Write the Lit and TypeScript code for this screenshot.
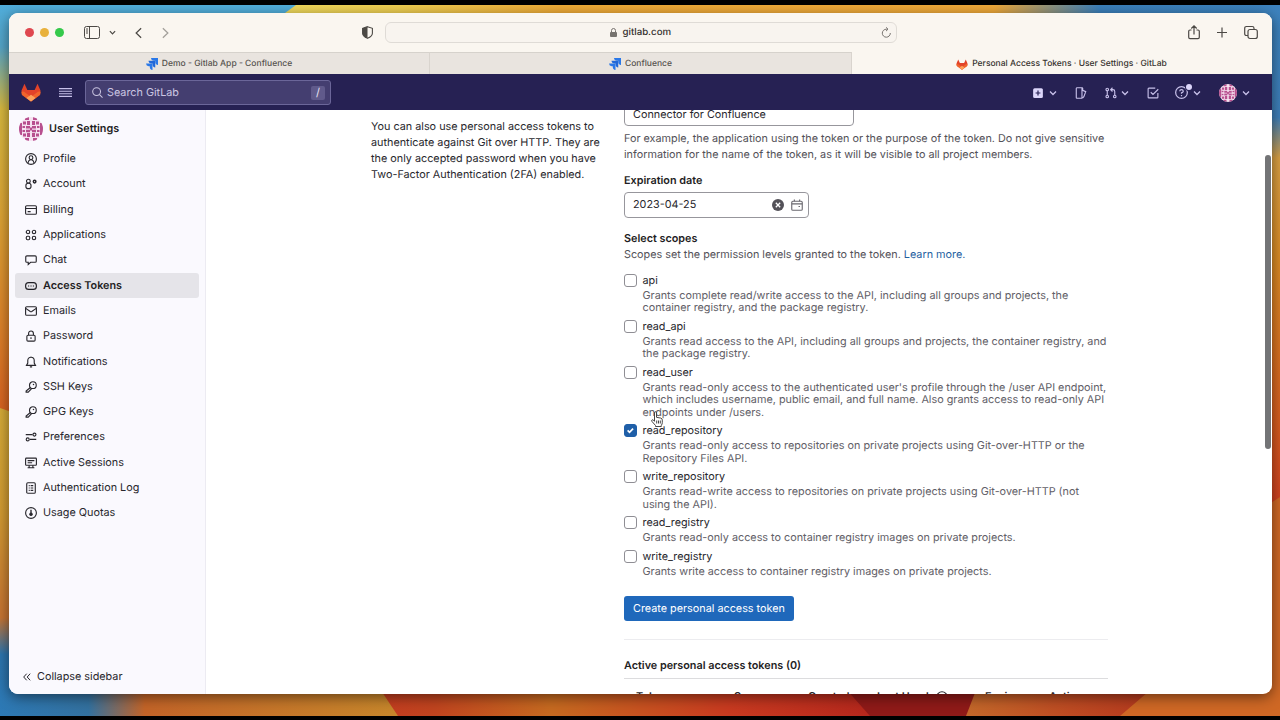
import { LitElement, html, css, svg } from "lit";
import { customElement } from "lit/decorators.js";

const FOX = html`<svg class="fox" viewBox="0 0 24 23">
  <path fill="#e24329" d="M12 22.5 1.2 14.4 .5 9.2 4.1.8 7.6 8.4h8.8L19.9.8l3.6 8.4-.7 5.2z"/>
  <path fill="#f0642c" d="M12 22.500.9 14.300.3 10.500Q3 9.600 5.600 12L12 17l6.400-5Q21 9.600 23.700 10.500l-.6 3.800z"/>
  <path fill="#fca05a" d="m12 22.500-5.500-4.200L12 14.200l5.500 4.100z"/>
</svg>`;

const JIRA = html`<svg class="jira" viewBox="0 0 24 24" fill="#2a78e8">
  <path d="M10 0H24v14a6 6 0 0 1-5.400-6V5.400H16A6 6 0 0 1 10 0z"/>
  <path fill="#2268d8" d="M5 5.500h13.500V19a6 6 0 0 1-5.400-6v-2.100H11a6 6 0 0 1-6-5.400z"/>
  <path d="M0 11h13v13a6 6 0 0 1-5.400-6v-1.600H5.400A6 6 0 0 1 0 11z"/>
</svg>`;

const stroke = (inner: unknown, cls = "ic") => html`<svg class=${cls} viewBox="0 0 16 16" fill="none" stroke="currentColor" stroke-width="1.5">${inner}</svg>`;
const chevron = (cls: string) => html`<svg class="chev ${cls}" viewBox="0 0 8 8" fill="none" stroke="currentColor" stroke-width="1.3"><path d="m1 2.500 3 3 3-3"/></svg>`;
const KEY = svg`<circle cx="10.500" cy="5.500" r="4.500"/><path d="M7.200 8.700 1.500 13.400v1.400h2.800l4.800-4.900"/><circle cx="11.300" cy="4.700" r="1" fill="currentColor" stroke="none"/>`;

const AVATAR = html`<svg class="avatar" viewBox="0 0 24 24">
  <defs><clipPath id="c"><circle cx="12" cy="12" r="12"/></clipPath></defs>
  <g clip-path="url(#c)"><rect width="24" height="24" fill="#f6e3f1"/>
  <g fill="#b8508f">
    <path d="M0 6h3v12H0zM21 6h3v12h-3zM6 0h4v3H6zM14 0h4v3h-4zM6 21h4v3H6zM14 21h4v3h-4z"/>
    <path d="M4 4.500h3v3H4zM17 4.500h3v3h-3zM4 16.500h3v3H4zM17 16.500h3v3h-3zM8 4h3v4H8zM13 4h3v4h-3zM8 16h3v4H8zM13 16h3v4h-3zM7 9h4v2.500H7zM13 9h4v2.500h-4zM7 12.800h4v2.500H7zM13 12.800h4v2.500h-4zM3.500 9H6v2H3.500zM18 9h2.500v2H18zM3.500 13H6v2H3.500zM18 13h2.500v2H18zM11 10.500h2v3h-2z"/>
  </g></g>
</svg>`;

const NAV: { label: string; icon: unknown; active?: boolean }[] = [
  { label: "Profile", icon: svg`<circle cx="8" cy="8" r="7.200"/><circle cx="8" cy="6.200" r="2.500"/><path d="M3.800 13.500 5.500 9.800M12.200 13.500l-1.700-3.700M5 10.500q3-3 6 0"/>` },
  { label: "Account", icon: svg`<circle cx="4.500" cy="4.200" r="2.500"/><rect x="1.200" y="7" width="6.800" height="7.200" rx="3"/><circle cx="12.800" cy="4.800" r="1.700" stroke-width="2"/>` },
  { label: "Billing", icon: svg`<rect x=".8" y="2.300" width="14.400" height="11.400" rx="1.500"/><path d="M.8 6h14.400M3.500 10.200h4"/>` },
  { label: "Applications", icon: svg`<circle cx="4" cy="4" r="2.300"/><circle cx="12" cy="4" r="2.300"/><rect x="1.700" y="9.700" width="4.600" height="4.600" rx="1.500"/><circle cx="12" cy="12" r="2.300"/>` },
  { label: "Chat", icon: svg`<path d="M2.500 2.500h11a1.500 1.500 0 0 1 1.500 1.500v5.500a1.500 1.500 0 0 1-1.500 1.500H7.500L4.300 14v-3H2.500A1.500 1.500 0 0 1 1 9.500V4a1.500 1.500 0 0 1 1.500-1.500z"/>` },
  { label: "Access Tokens", active: true, icon: svg`<rect x=".8" y="3.500" width="14.400" height="9" rx="4"/><path d="M4 8h1.500M7.300 8h1.500M10.500 8H12"/>` },
  { label: "Emails", icon: svg`<rect x=".8" y="2.300" width="14.400" height="11.400" rx="1.500"/><path d="m1 4.500 6 4.200q1 .6 2 0l6-4.200"/>` },
  { label: "Password", icon: svg`<rect x="2.500" y="7" width="11" height="7.800" rx="1.500"/><path d="M4.800 7V4.500a3.200 3.200 0 0 1 6.400 0V7M8 9.800v2.200"/>` },
  { label: "Notifications", icon: svg`<path d="M2 12.500 3.700 9.500V6a4.300 4.300 0 0 1 8.600 0v3.500l1.700 3zM8 .5v1.300M6.500 14.500h3"/>` },
  { label: "SSH Keys", icon: KEY },
  { label: "GPG Keys", icon: KEY },
  { label: "Preferences", icon: svg`<path d="M1 4.800h9M6.500 11.200H15"/><circle cx="12.600" cy="4.800" r="2"/><circle cx="3.600" cy="11.200" r="2"/>` },
  { label: "Active Sessions", icon: svg`<rect x=".8" y="1.500" width="14.400" height="9.500" rx="1"/><path d="M3.500 4.800h9M3.500 7.600h6M5.500 11v3M10.500 11v3M3.500 14.300h9"/>` },
  { label: "Authentication Log", icon: svg`<rect x="2.300" y="1" width="11.400" height="14" rx="1.500"/><path d="M5 4.800h1.300M7.500 4.800H11M5 8h1.300M7.500 8H11M5 11.200h1.300M7.500 11.200H11"/>` },
  { label: "Usage Quotas", icon: svg`<circle cx="8" cy="8" r="7.200"/><path d="M8 3.500v5" stroke-width="1.800"/><circle cx="8" cy="9.800" r="1.600" fill="currentColor"/>` },
];

const SCOPES: { name: string; lines: string[]; checked?: boolean }[] = [
  { name: "api", lines: ["Grants complete read/write access to the API, including all groups and projects, the", "container registry, and the package registry."] },
  { name: "read_api", lines: ["Grants read access to the API, including all groups and projects, the container registry, and", "the package registry."] },
  { name: "read_user", lines: ["Grants read-only access to the authenticated user's profile through the /user API endpoint,", "which includes username, public email, and full name. Also grants access to read-only API", "endpoints under /users."] },
  { name: "read_repository", checked: true, lines: ["Grants read-only access to repositories on private projects using Git-over-HTTP or the", "Repository Files API."] },
  { name: "write_repository", lines: ["Grants read-write access to repositories on private projects using Git-over-HTTP (not", "using the API)."] },
  { name: "read_registry", lines: ["Grants read-only access to container registry images on private projects."] },
  { name: "write_registry", lines: ["Grants write access to container registry images on private projects."] },
];

@customElement("app-root")
export class AppRoot extends LitElement {
  static styles = css`
    :host { display: block; width: 1280px; height: 720px; overflow: hidden; background: #000;
      font-family: Inter, "Liberation Sans", sans-serif; font-size: 10.82px; line-height: 16px; color: #28272d;
      text-rendering: geometricPrecision; }
    * { box-sizing: border-box; }
    svg { display: block; flex: none; }
    .stage { position: relative; height: 720px; padding: 13px 8px 27px 9px; }
    .wall { position: absolute; left: 0; top: 5px; width: 1280px; height: 711px; }
    .window { position: relative; height: 681px; border-radius: 9px; overflow: hidden; background: #fff;
      display: flex; flex-direction: column; }
    .shade { position: absolute; left: 9px; top: 13px; width: 1263px; height: 681px; border-radius: 9px; box-shadow: 0 3px 14px rgba(0,0,0,.5); }
    .toolbar { height: 39px; flex: none; background: #faf6f0; display: flex; align-items: center; color: #4c4945; padding: 0 14.500px 0 15.500px; }
    .lights { display: flex; gap: 5.500px; margin-right: 19.500px; }
    .lights i { width: 9.600px; height: 9.600px; border-radius: 50%; background: #df4850; }
    .lights i:nth-child(2) { background: #e8b13c; }
    .lights i:nth-child(3) { background: #35c94b; }
    .side { width: 16px; height: 13px; margin-right: 9px; }
    .down { width: 7px; height: 7px; margin-right: 19px; }
    .nav { width: 7px; height: 12px; margin-right: 20px; }
    .nav.fwd { opacity: .5; margin-right: 193px; }
    .shield { width: 11px; height: 13px; margin-right: 12px; }
    .url { width: 512px; height: 21px; border: 1px solid #dfdbd6; border-radius: 6px; background: #f8f4ef; display: flex; align-items: center;
      justify-content: center; gap: 5px; font-size: 9.700px; font-weight: 450; color: #33302d; position: relative; }
    .lock { width: 7px; height: 9px; }
    .reload { position: absolute; right: 4px; top: 4px; width: 11px; height: 11px; }
    .right { margin-left: auto; display: flex; align-items: center; gap: 14.500px; }
    .right svg { width: 14px; height: 15px; }
    .tabs { height: 22px; flex: none; display: grid; grid-template-columns: 421px 422px 1fr; font-size: 8.520px; font-weight: 450; color: #57534f; }
    .tab { display: flex; align-items: center; justify-content: center; gap: 4px; padding-top: 1px; background: #e9e4df; border-top: 1px solid #d6d2cc; border-right: 1px solid #d9d4ce; }
    .tab.on { background: #faf6f0; border-color: #faf6f0; color: #37332f; }
    .jira { width: 12px; height: 12px; }
    .tab .fox { width: 12px; height: 11px; }
    .header { height: 36px; flex: none; background: #262153; display: flex; align-items: center; padding: 1px 0 0 12px; color: #c8c1ea; }
    .header .fox { width: 20px; height: 19px; }
    .burger { width: 13px; height: 9px; margin: 0 13px 0 18px; }
    .search { width: 246px; height: 25px; border: 1px solid #6b6699; border-radius: 3px; background: #443e70; display: flex; align-items: center;
      padding: 0 5px 0 6px; gap: 4px; color: #cbc6e2; }
    .search .ic { width: 11px; height: 11px; }
    .search kbd { margin-left: auto; width: 14px; height: 14px; border-radius: 2px; background: #605a8b; font: inherit; line-height: 14px; text-align: center; color: #e9e6f5; }
    .tools { margin-left: auto; display: flex; align-items: center; margin-right: 22px; }
    .tools .ic { width: 12px; height: 12px; }
    .chev { width: 8px; height: 8px; }
    .g1 { margin-left: 5px; margin-right: 17.500px; }
    .notes { margin-right: 18.500px; }
    .g2 { margin-left: 4px; margin-right: 18px; }
    .help-ic { position: relative; margin-left: 16px; }
    .tools .help-ic .ic { width: 13px; height: 13px; }
    .dot { position: absolute; left: 11px; top: -2px; width: 6px; height: 6px; border-radius: 50%; background: #dcd6fa; box-shadow: 0 0 0 1px #262153; }
    .g3 { margin-left: 5px; margin-right: 18px; }
    .g4 { margin-left: 5px; }
    .tools .avatar { width: 18px; height: 18px; }
    .body { flex: 1; min-height: 0; display: flex; position: relative; }
    .sidebar { width: 197px; flex: none; background: #faf9fe; border-right: 1px solid #ecebf2; display: flex; flex-direction: column; padding: 7.200px 6px 0; }
    .who { display: flex; align-items: center; gap: 6px; font-weight: 600; height: 23px; padding-left: 4px; margin-bottom: 6.300px; color: #1f1e24; }
    .who .avatar { width: 24px; height: 24px; }
    .item { height: 25.300px; flex: none; display: flex; align-items: center; gap: 6px; padding-left: 10px; border-radius: 3px; white-space: nowrap; }
    .item .ic { width: 12px; height: 12px; }
    .item.active { background: #e5e4e9; font-weight: 600; color: #1f1e24; }
    .collapse { margin-top: auto; margin-bottom: 9.400px; display: flex; align-items: center; gap: 6.500px; padding-left: 7.500px; }
    .collapse svg { width: 8px; height: 8px; }
    .main { flex: 1; min-width: 0; display: flex; overflow: hidden; padding-left: 165px; white-space: nowrap; }
    .intro { width: 253px; flex: none; padding-top: 8.900px; }
    .form { width: 484px; flex: none; margin-top: -9.200px; }
    .field { border: 1px solid #97969c; border-radius: 4px; height: 26px; display: flex; align-items: center; padding: 0 8px; }
    .name { width: 230px; height: 25.200px; padding-top: 3px; }
    .help { margin-top: 4.800px; color: #535158; }
    .label { font-weight: 600; color: #1f1e24; }
    .exp { margin: 10px 0 3.200px; }
    .date { width: 185px; padding: 1px 5px 0 8px; }
    .date .clear { width: 12px; height: 12px; margin-left: auto; margin-right: 7px; }
    .date .ic { width: 12px; height: 12px; color: #6a686f; }
    .sel { margin-top: 12.800px; }
    .sub { color: #535158; margin-bottom: 10.200px; }
    .sub a { color: #1f5f9f; }
    .scope { display: grid; grid-template-columns: 18.500px 1fr; padding-bottom: 4.400px; }
    .box { width: 12.500px; height: 12.500px; margin-top: 1.200px; border: 1px solid #8f8e94; border-radius: 3px; background: #fff; }
    .box.checked { background: #1f5fa8; border-color: #1f5fa8; }
    .box svg { width: 10.500px; height: 10.500px; }
    .desc { margin-top: 1.200px; line-height: 12.200px; color: #626067; }
    .btn { margin-top: 13.500px; width: 170px; height: 25px; border-radius: 3px; background: #1f68bb; color: #fff; display: flex; align-items: center; justify-content: center; }
    .rule { height: 1px; background: #ececef; margin: 18px 0 17.500px; }
    .tokens { padding-bottom: 4.500px; border-bottom: 1px solid #dcdcde; }
    .thead { display: grid; grid-template-columns: 98px 74px 69px 108px 64px 1fr; padding: 10px 0 0 12px; font-weight: 600; }
    .last { display: flex; gap: 7px; }
    .thead .ic { width: 12px; height: 12px; margin-top: 2px; }
    .scroll { position: absolute; right: 1px; top: 45px; width: 6px; height: 294px; border-radius: 3px; background: #737476; }
    .hand { position: absolute; left: 651px; top: 411px; width: 12px; height: 16px; }
  `;

  render() {
    return html`
    <div class="stage">
      <svg class="wall" viewBox="0 5 1280 711" preserveAspectRatio="none">
        <defs>
          <linearGradient id="topy"><stop offset="0" stop-color="#f0df62"/><stop offset=".17" stop-color="#efcf52"/><stop offset=".32" stop-color="#f0ac38"/><stop offset=".73" stop-color="#efa93a"/><stop offset=".83" stop-color="#3b80bb"/><stop offset="1" stop-color="#3d83be"/></linearGradient>
          <linearGradient id="l" x2="0" y2="1"><stop offset="0" stop-color="#50addb"/><stop offset=".1" stop-color="#55a5c8"/><stop offset=".25" stop-color="#d8b93f"/><stop offset=".5" stop-color="#dda535"/><stop offset=".8" stop-color="#dd7f28"/><stop offset="1" stop-color="#d75f20"/></linearGradient>
          <linearGradient id="l2" x2="0" y2="1"><stop offset="0" stop-color="#d6ac38"/><stop offset=".35" stop-color="#d29a32"/><stop offset=".68" stop-color="#c77432"/><stop offset=".8" stop-color="#2d75ae"/><stop offset="1" stop-color="#2c74ad"/></linearGradient>
          <linearGradient id="r" x2="0" y2="1"><stop offset="0" stop-color="#3d83be"/><stop offset=".22" stop-color="#3e7fb9"/><stop offset=".3" stop-color="#d9a044"/><stop offset=".5" stop-color="#da8b25"/><stop offset=".82" stop-color="#d65c1e"/><stop offset="1" stop-color="#ce3c20"/></linearGradient>
          <linearGradient id="b"><stop offset="0" stop-color="#2d79b5"/><stop offset=".22" stop-color="#33719f"/><stop offset=".36" stop-color="#c36428"/><stop offset="1" stop-color="#c7872b"/></linearGradient>
          <linearGradient id="b2"><stop offset="0" stop-color="#c43c20"/><stop offset=".12" stop-color="#c0441f"/><stop offset=".35" stop-color="#c66a20"/><stop offset=".7" stop-color="#c83a20"/><stop offset="1" stop-color="#b4261c"/></linearGradient>
          <linearGradient id="b3"><stop offset="0" stop-color="#c4682a"/><stop offset=".5" stop-color="#bd4a22"/><stop offset="1" stop-color="#b2341d"/></linearGradient>
        </defs>
        <rect y="5" width="640" height="80" fill="#52afdc"/>
        <path d="M296 5H1280V60H220z" fill="url(#topy)"/>
        <rect y="5" width="20" height="415" fill="url(#l)"/>
        <path d="M0 408 20 415V716H0z" fill="url(#l2)"/>
        <rect x="1260" y="5" width="20" height="510" fill="url(#r)"/>
        <path d="M0 680H380L402 716H0z" fill="url(#b)"/>
        <path d="M374 680H850L880 716H398z" fill="url(#b2)"/>
        <path d="M838 680H990L970 716H870z" fill="#8f1a18"/>
        <path d="M980 680H1175L1130 716H966z" fill="url(#b3)"/>
        <path d="M1280 497 1260 510V680H1162L1120 716H1280z" fill="#cf6825"/>
      </svg>
      <div class="shade"></div>
      <div class="window">
        <div class="toolbar">
          <div class="lights"><i></i><i></i><i></i></div>
          <svg class="side" viewBox="0 0 16 13" fill="none" stroke="currentColor"><rect x=".5" y=".5" width="15" height="12" rx="2"/><path d="M5.500.5v12M2 3h2M2 5h2M2 7h2"/></svg>
          <svg class="down" viewBox="0 0 8 8" fill="none" stroke="currentColor" stroke-width="1.400"><path d="m1 2.500 3 3 3-3"/></svg>
          <svg class="nav" viewBox="0 0 8 13" fill="none" stroke="currentColor" stroke-width="1.400"><path d="M7 1 1.300 6.500 7 12"/></svg>
          <svg class="nav fwd" viewBox="0 0 8 13" fill="none" stroke="currentColor" stroke-width="1.400"><path d="m1 1 5.700 5.500L1 12"/></svg>
          <svg class="shield" viewBox="0 0 11 13"><path d="M5.500.7 10.400 2.300v4.900q0 3-4.900 5.100Q.6 10.200.6 7.200V2.300z" fill="none" stroke="currentColor" stroke-width="1.100"/><path d="M5.500.7v11.600Q.6 10.200.6 7.200V2.300z" fill="currentColor"/></svg>
          <div class="url">
            <svg class="lock" viewBox="0 0 7 9"><rect y="4" width="7" height="5" rx="1" fill="#77736f"/><path d="M1.500 4V2.500a2 2 0 0 1 4 0V4" fill="none" stroke="#77736f"/></svg>
            <span>gitlab.com</span>
            <svg class="reload" viewBox="0 0 11 11" fill="none" stroke="#77736f"><path d="M9.300 6A4 4 0 1 1 5.500 2.200h1.300M5 .3l2 1.900-2 1.900"/></svg>
          </div>
          <div class="right">
            <svg viewBox="0 0 14 15" fill="none" stroke="currentColor" stroke-width="1.200"><path d="M4.500 5H3Q1.700 5 1.700 6.300v6Q1.700 13.600 3 13.600h8q1.300 0 1.300-1.300v-6Q12.300 5 11 5H9.500M7 9.500V1M4.300 3.500 7 .9l2.700 2.600"/></svg>
            <svg viewBox="0 0 14 15" fill="none" stroke="currentColor" stroke-width="1.200"><path d="M7 2.500v10M2 7.500h10"/></svg>
            <svg viewBox="0 0 14 15" fill="none" stroke="currentColor" stroke-width="1.200"><rect x="4" y="4.500" width="9.300" height="9" rx="2"/><path d="M4 10.500H2.500Q.7 10.500.7 8.700V3.300q0-1.800 1.800-1.800H8.200Q10 1.500 10 3.300v1.200"/></svg>
          </div>
        </div>
        <div class="tabs">
          <div class="tab">${JIRA}<span>Demo - Gitlab App - Confluence</span></div>
          <div class="tab">${JIRA}<span>Confluence</span></div>
          <div class="tab on">${FOX}<span>Personal Access Tokens · User Settings · GitLab</span></div>
        </div>
        <div class="header">
          ${FOX}
          <svg class="burger" viewBox="0 0 13 9" stroke="currentColor" stroke-width="1.100"><path d="M0 .6h13M0 3.200h13M0 5.800h13M0 8.400h13"/></svg>
          <div class="search">${stroke(svg`<circle cx="6.700" cy="6.700" r="5.700"/><path d="m11 11 4.300 4.300"/>`)}<span>Search GitLab</span><kbd>/</kbd></div>
          <div class="tools">
            <svg class="ic" viewBox="0 0 16 16"><rect x="1.500" y="1.500" width="13" height="13" rx="2" fill="#dcd6fa"/><path d="M8 4.800v6.400M4.800 8h6.400" stroke="#262153" stroke-width="1.600"/></svg>
            ${chevron("g1")}
            ${stroke(svg`<path d="M2.500 1h6.800v14H2.500A1 1 0 0 1 1.700 14V2a1 1 0 0 1 .8-1zM9.300 1q1 0 1 1v2.500l4 1.700-2.500 6.600-1.500 1.700"/>`, "ic notes")}
            ${stroke(svg`<circle cx="3" cy="3.300" r="1.700"/><circle cx="3" cy="12.700" r="1.700"/><circle cx="13" cy="12.700" r="1.700"/><path d="M3 5v6M13 11V6q0-2.500-2.500-2.500H8M10 1 7.500 3.500 10 6"/>`)}
            ${chevron("g2")}
            ${stroke(svg`<path d="M11 1.500H2.500a1 1 0 0 0-1 1v11a1 1 0 0 0 1 1h11a1 1 0 0 0 1-1V8M5 7l3 3 7-7"/>`)}
            <span class="help-ic">${stroke(svg`<circle cx="8" cy="8" r="7.200"/><path d="M5.800 6.500Q6 4.500 8 4.500T10.200 6.500Q10.200 7.500 8 8.500v1M8 11v1.500"/>`)}<i class="dot"></i></span>
            ${chevron("g3")}
            ${AVATAR}
            ${chevron("g4")}
          </div>
        </div>
        <div class="body">
          <div class="sidebar">
            <div class="who">${AVATAR}<span>User Settings</span></div>
            ${NAV.map((n) => html`<div class="item ${n.active ? "active" : ""}">${stroke(n.icon)}<span>${n.label}</span></div>`)}
            <div class="collapse"><svg viewBox="0 0 8 8" fill="none" stroke="currentColor"><path d="M3.700.7.700 4l3 3.300M7.200.7l-3 3.300 3 3.300"/></svg><span>Collapse sidebar</span></div>
          </div>
          <div class="main">
            <div class="intro">You can also use personal access tokens to<br>authenticate against Git over HTTP. They are<br>the only accepted password when you have<br>Two-Factor Authentication (2FA) enabled.</div>
            <div class="form">
              <div class="field name">Connector for Confluence</div>
              <div class="help">For example, the application using the token or the purpose of the token. Do not give sensitive<br>information for the name of the token, as it will be visible to all project members.</div>
              <div class="label exp">Expiration date</div>
              <div class="field date"><span>2023-04-25</span>
                <svg class="clear" viewBox="0 0 12 12"><circle cx="6" cy="6" r="6" fill="#535158"/><path d="m3.800 3.800 4.400 4.400M8.200 3.800 3.800 8.200" stroke="#fff" stroke-width="1.300"/></svg>
                ${stroke(svg`<rect x="1" y="3" width="14" height="12" rx="1.500"/><path d="M1 6.500h14M4.500.5V3M11.500.5V3M10 10h2"/>`)}
              </div>
              <div class="label sel">Select scopes</div>
              <div class="sub">Scopes set the permission levels granted to the token. <a>Learn more.</a></div>
              ${SCOPES.map((s) => html`<div class="scope">
                <div class="box ${s.checked ? "checked" : ""}">${s.checked ? html`<svg viewBox="0 0 10 10" fill="none" stroke="#fff" stroke-width="1.600"><path d="M2.500 5.200 4.300 7l3.400-3.600"/></svg>` : ""}</div>
                <div><div>${s.name}</div><div class="desc">${s.lines.map((l) => html`<div>${l}</div>`)}</div></div>
              </div>`)}
              <div class="btn">Create personal access token</div>
              <div class="rule"></div>
              <div class="label tokens">Active personal access tokens (0)</div>
              <div class="thead"><span>Token name</span><span>Scopes</span><span>Created</span><span class="last">Last Used ${stroke(svg`<circle cx="8" cy="8" r="7"/>`)}</span><span>Expires</span><span>Action</span></div>
            </div>
          </div>
          <div class="scroll"></div>
        </div>
      </div>
      <svg class="hand" viewBox="0 0 12 16" fill="#fff" stroke="#333" stroke-width=".9"><path d="M3.500 9V2q0-1.300 1-1.300T5.500 2v4.300l4.300.8q1.500.4 1.500 2v2.400q0 1.500-1 3v1H4.500v-1L1 10.500q-.8-1.300.2-1.700t2.300 1.500zM5.700 9.500v3M7.500 9.500v3M9.300 9.500v3"/></svg>
    </div>`;
  }
}
